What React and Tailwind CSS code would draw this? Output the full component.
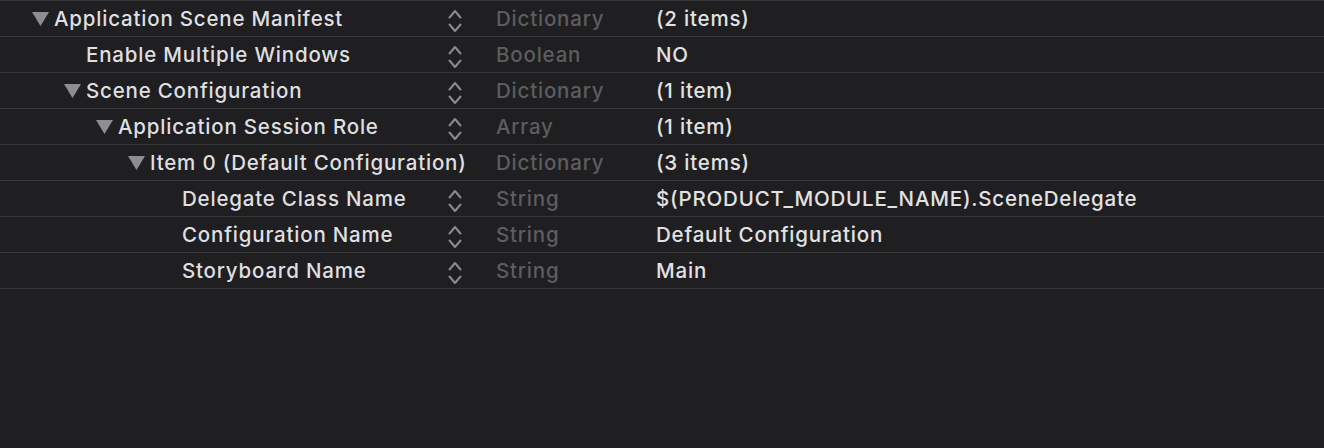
import React from 'react';

const rows = [
    { key: 'Application Scene Manifest', level: 0, open: true, type: 'Dictionary', value: '(2 items)' },
    { key: 'Enable Multiple Windows', level: 1, type: 'Boolean', value: 'NO' },
    { key: 'Scene Configuration', level: 1, open: true, type: 'Dictionary', value: '(1 item)' },
    { key: 'Application Session Role', level: 2, open: true, type: 'Array', value: '(1 item)' },
    { key: 'Item 0 (Default Configuration)', level: 3, open: true, type: 'Dictionary', value: '(3 items)', noStepper: true },
    { key: 'Delegate Class Name', level: 4, type: 'String', value: '$(PRODUCT_MODULE_NAME).SceneDelegate' },
    { key: 'Configuration Name', level: 4, type: 'String', value: 'Default Configuration' },
    { key: 'Storyboard Name', level: 4, type: 'String', value: 'Main' },
];

const indents = ['pl-[32px]', 'pl-[64px]', 'pl-[96px]', 'pl-[128px]', 'pl-[160px]'];

const Stepper = () => (
    <svg width="14" height="24" viewBox="0 0 14 24" fill="none" stroke="#8b8b8d" strokeWidth="2" strokeLinecap="round" strokeLinejoin="round">
        <path d="M1.5 8.5 L7 2 L12.5 8.5" />
        <path d="M1.5 15.5 L7 22 L12.5 15.5" />
    </svg>
);

const Triangle = () => (
    <svg width="17" height="14" viewBox="0 0 17 14" className="shrink-0">
        <path d="M0 0 H17 L8.5 14 Z" fill="#8e8e90" />
    </svg>
);

const App = () => {
    return (
        <div className="w-[1324px] h-[448px] bg-[#1f1f21] overflow-hidden font-['Inter','Noto_Sans',sans-serif] font-medium border-t border-[#38383a]">
            {rows.map((row) => (
                <div key={row.key} className="h-[36px] flex items-center border-b border-[#38383a]">
                    <div className={`w-[440px] flex items-center ${indents[row.level]}`}>
                        <div className="w-[22px] shrink-0 flex items-center">
                            {row.open && <Triangle />}
                        </div>
                        <span className="text-[20.5px] text-[#dfdfe0] whitespace-nowrap tracking-[0.8px] pt-[2px]">{row.key}</span>
                    </div>
                    <div className="w-[56px] pl-[8px] flex items-center pt-[5px]">
                        {!row.noStepper && <Stepper />}
                    </div>
                    <div className="w-[160px] text-[20.5px] text-[#5d5d60] tracking-[0.8px] pt-[2px]">{row.type}</div>
                    <div className="text-[20.5px] text-[#e2e2e3] whitespace-nowrap tracking-[0.8px] pt-[2px]">{row.value}</div>
                </div>
            ))}
        </div>
    );
};

export default App;
